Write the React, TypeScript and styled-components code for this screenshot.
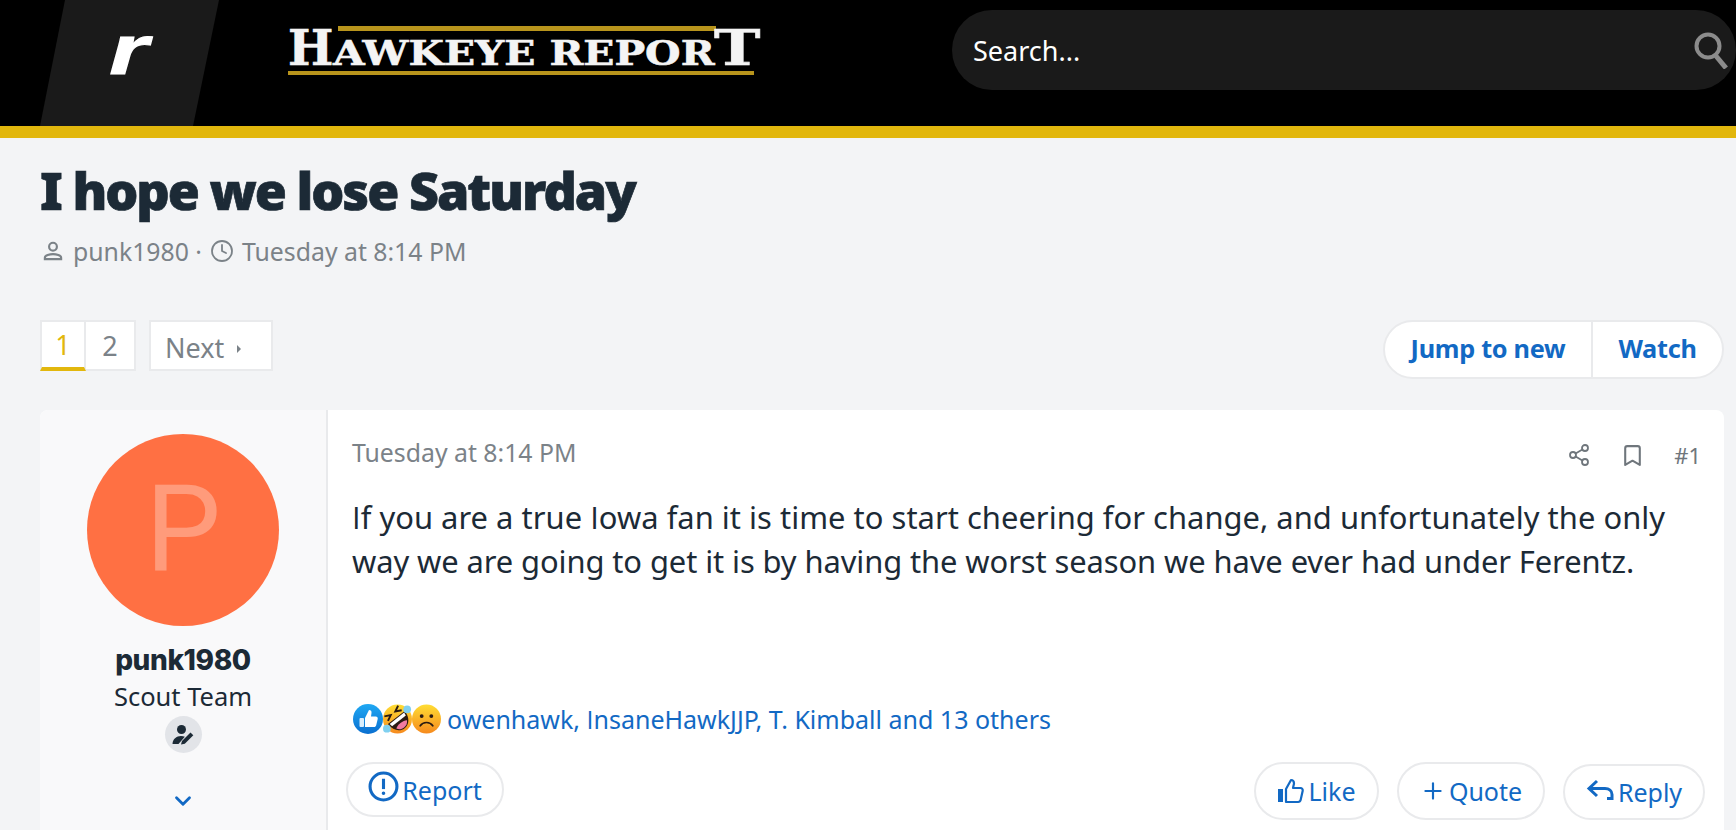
import React from "react";
import styled, { createGlobalStyle } from "styled-components";
import { Bookmark, ChevronDown, Clock, Plus, Share2 } from "lucide-react";

const GlobalStyle = createGlobalStyle`
  html, body {
    margin: 0;
    height: 830px;
    overflow: hidden;
    background: #f3f4f6;
    font-family: "Noto Sans", sans-serif;
  }
`;

const Header = styled.header`
  height: 126px;
  background: #000;
  border-bottom: 12px solid #e2b70d;
  display: flex;
  padding-left: 40px;
`;

const BrandBadge = styled.div`
  width: 179px;
  height: 126px;
  background: #1a1a1a;
  clip-path: polygon(25px 0, 100% 0, 153px 100%, 0 100%);
  display: flex;
  align-items: center;
  justify-content: center;
`;

const BrandLetter = styled.span`
  font: italic 700 70px/1 "Liberation Sans", sans-serif;
  color: #fff;
  display: block;
  -webkit-text-stroke: 1px #fff;
  transform: translate(-1px, -13px) scaleX(1.42);
`;

const Logo = styled.div`
  flex: none;
  width: 472px;
  margin: 26px 0 0 69px;
  display: flex;
  flex-direction: column;
`;

const LogoTopRule = styled.div`
  flex: none;
  height: 5px;
  width: 378px;
  margin-left: 50px;
  background: #b8941c;
`;

const LogoWord = styled.div`
  flex: none;
  height: 40px;
  display: flex;
  align-items: baseline;
  color: #f4f4f4;
  font-family: "DejaVu Serif", serif;
  font-weight: 700;
  line-height: 40px;
  white-space: nowrap;
  margin-top: -3px;
  -webkit-text-stroke: 0.6px #f4f4f4;
`;

const LogoSmall = styled.span`
  display: inline-block;
  flex: none;
  width: 381px;
  font-size: 34px;
  transform-origin: 0 100%;
  transform: scaleX(1.2);
`;

const LogoBig = styled.span<{ $stretch?: number }>`
  flex: none;
  font-size: 48px;
  transform-origin: 0 100%;
  transform: scaleX(${(p) => p.$stretch ?? 1});
`;

const LogoBottomRule = styled.div`
  flex: none;
  height: 4px;
  width: 466px;
  margin-top: 3px;
  background: #b8941c;
`;

const SearchBar = styled.div`
  flex: 1;
  height: 80px;
  margin: 10px 0 0 192px;
  padding: 0 6px 0 21px;
  box-sizing: border-box;
  background: #1a1a1a;
  border-radius: 40px;
  display: flex;
  align-items: center;
  justify-content: space-between;
  color: #fff;
  font-size: 27px;
`;

const Main = styled.main`
  padding: 0 12px 0 40px;
`;

const Title = styled.h1`
  margin: 0;
  padding-top: 22px;
  font-size: 52px;
  line-height: 60px;
  font-weight: 900;
  letter-spacing: -2px;
  -webkit-text-stroke: 0.7px #1c2a36;
  color: #1c2a36;
`;

const Meta = styled.div`
  display: flex;
  align-items: center;
  gap: 8px;
  margin-top: 14px;
  height: 34px;
  font-size: 24.8px;
  color: #7b8288;
  svg {
    flex: none;
  }
  svg:first-child {
    margin-right: -1px;
  }
`;

const Toolbar = styled.div`
  display: flex;
  justify-content: space-between;
  align-items: flex-start;
  margin-top: 52px;
`;

const Pages = styled.div`
  display: flex;
  height: 51px;
`;

const PageLink = styled.a<{ $active?: boolean }>`
  box-sizing: border-box;
  width: ${(p) => (p.$active ? "46px" : "50px")};
  display: flex;
  align-items: center;
  justify-content: center;
  background: #fff;
  border: 2px solid #e9eaec;
  border-left-width: ${(p) => (p.$active ? "2px" : "0")};
  border-bottom: ${(p) => (p.$active ? "4px solid #e2b70d" : "2px solid #e9eaec")};
  font-size: 27px;
  color: ${(p) => (p.$active ? "#e2b70d" : "#7b8288")};
`;

const NextLink = styled.a`
  box-sizing: border-box;
  width: 124px;
  margin-left: 13px;
  display: flex;
  align-items: center;
  padding: 3px 0 0 14px;
  gap: 13px;
  background: #fff;
  border: 2px solid #e9eaec;
  font-size: 27px;
  color: #7b8288;
`;

const Caret = styled.span`
  width: 0;
  height: 0;
  margin-top: 3px;
  border-left: 4px solid #7b8288;
  border-top: 4px solid transparent;
  border-bottom: 4px solid transparent;
`;

const ButtonGroup = styled.div`
  display: flex;
  height: 59px;
  box-sizing: border-box;
  background: #fff;
  border: 2px solid #e9eaec;
  border-radius: 30px;
`;

const GroupButton = styled.a<{ $width: number }>`
  width: ${(p) => p.$width}px;
  padding-bottom: 3px;
  box-sizing: border-box;
  display: flex;
  align-items: center;
  justify-content: center;
  font-size: 25.3px;
  font-weight: 700;
  letter-spacing: -0.3px;
  color: #1269c4;
  & + & {
    border-left: 2px solid #e9eaec;
  }
`;

const Post = styled.article`
  display: flex;
  height: 420px;
  margin-top: 31px;
  background: #fff;
  border-radius: 8px 8px 0 0;
  overflow: hidden;
`;

const UserColumn = styled.aside`
  box-sizing: border-box;
  width: 288px;
  flex: none;
  padding-top: 24px;
  background: #f9f9fa;
  border-right: 2px solid #e9eaec;
  display: flex;
  flex-direction: column;
  align-items: center;
`;

const Avatar = styled.div`
  width: 192px;
  height: 192px;
  border-radius: 50%;
  background: #ff7043;
  color: rgba(255, 255, 255, 0.3);
  display: flex;
  align-items: center;
  justify-content: center;
  font: 400 120px/1 Roboto, sans-serif;
`;

const UserName = styled.div`
  margin-top: 16px;
  font: 800 28px/36px Inter, sans-serif;
  letter-spacing: -0.4px;
  color: #1c2a36;
`;

const UserTitle = styled.div`
  font-size: 25.5px;
  line-height: 36px;
  margin: 0 0 2px;
  color: #1c2a36;
`;

const UserBadge = styled.div`
  width: 37px;
  height: 37px;
  border-radius: 50%;
  background: #e2e4e8;
  display: flex;
  align-items: center;
  justify-content: center;
`;

const Expand = styled.div`
  margin-top: 35px;
  color: #1269c4;
  display: flex;
`;

const PostBody = styled.div`
  flex: 1;
  min-width: 0;
  display: flex;
  flex-direction: column;
`;

const PostHead = styled.div`
  display: flex;
  align-items: flex-start;
  justify-content: space-between;
  padding: 26px 23px 0 24px;
  height: 32px;
  font-size: 24.8px;
  line-height: 32px;
  color: #7b8288;
`;

const PostTools = styled.div`
  display: flex;
  align-items: center;
  height: 38px;
  color: #6f767c;
  font-size: 22px;
  gap: 29px;
`;

const PostText = styled.div`
  padding: 27px 24px 0 24px;
  font-size: 30.9px;
  line-height: 44px;
  color: #1c2a36;
`;

const PostLine = styled.div<{ $tracking: number }>`
  letter-spacing: ${(p) => p.$tracking}px;
  white-space: nowrap;
`;

const Reactions = styled.div`
  display: flex;
  align-items: center;
  margin-top: 121px;
  padding-left: 25px;
  height: 30px;
  color: #1269c4;
  font-size: 25px;
`;

const PlainI = styled.span`
  font-family: "Open Sans", sans-serif;
`;

const ReactionIcons = styled.div`
  display: flex;
  margin-right: 6px;
`;

const Actions = styled.div`
  display: flex;
  align-items: flex-start;
  justify-content: space-between;
  margin-top: 28px;
  padding: 0 19px 0 18px;
`;

const ActionGroup = styled.div`
  display: flex;
  gap: 18px;
`;

const ActionButton = styled.a<{ $width: number; $height?: number; $drop?: number }>`
  box-sizing: border-box;
  width: ${(p) => p.$width}px;
  height: ${(p) => p.$height ?? 58}px;
  margin-top: ${(p) => p.$drop ?? 0}px;
  display: flex;
  align-items: center;
  justify-content: center;
  gap: 3px;
  border: 2px solid #e9eaec;
  border-radius: 29px;
  background: #fff;
  color: #1269c4;
  font-size: 25px;
`;

const SearchIcon = () => (
  <svg width="38" height="38" viewBox="0 0 38 38" fill="none" stroke="#8c8c8c" strokeWidth="4">
    <circle cx="16" cy="15" r="11.5" />
    <path d="M24 25l10 12" strokeWidth="5" />
  </svg>
);

const UserIcon = () => (
  <svg width="26" height="26" viewBox="0 0 24 24" fill="none" stroke="#7b8288" strokeWidth="2">
    <circle cx="12" cy="8" r="3.6" />
    <path d="M4.5 19.5v-1.2c0-2.2 4.4-3.4 7.5-3.4s7.5 1.2 7.5 3.4v1.2z" />
  </svg>
);

const PosterIcon = () => (
  <svg width="24" height="24" viewBox="0 0 24 24" fill="#1c2a36">
    <circle cx="10.5" cy="6.5" r="4.5" />
    <path d="M1.500 21c0-5 4-8 8.500-8 1.500 0 2.800.3 3.800.8L7.500 21z" />
    <path d="M10 21.500l1-3.500 8.500-8.500 2.800 2.800-8.500 8.500z" />
  </svg>
);

const ThumbIcon = () => (
  <svg width="28" height="28" viewBox="0 0 28 28" fill="none" stroke="#1269c4" strokeWidth="2.2" strokeLinejoin="round">
    <rect x="1" y="12" width="5" height="13" fill="#1269c4" stroke="none" />
    <path d="M9 12l5-9c2 0 3 1.600 3 3.500L16 11h7.500c1.500 0 2.500 1.300 2.200 2.800l-2 9c-.3 1.300-1.200 2.200-2.600 2.200H9z" />
  </svg>
);

const ReplyIcon = () => (
  <svg width="29" height="28" viewBox="0 0 29 28" fill="none" stroke="#1269c4" strokeWidth="3">
    <path d="M11 3L3 10.500 11 18" />
    <path d="M4 10.500h15c4 0 7 2.500 7 6v4h-5" />
  </svg>
);

const ReportIcon = () => (
  <svg width="31" height="31" viewBox="0 0 30 30" fill="none" stroke="#1269c4" strokeWidth="3" style={{ marginTop: -6 }}>
    <circle cx="15" cy="15" r="13" />
    <path d="M15 7.500v10" />
    <circle cx="15" cy="21.500" r="1" fill="#1269c4" strokeWidth="1.500" />
  </svg>
);

const LikeEmoji = () => (
  <svg width="30" height="30" viewBox="0 0 30 30">
    <defs>
      <linearGradient id="likeFill" x1="0" y1="0" x2="0" y2="1">
        <stop offset="0" stopColor="#1fa8f3" />
        <stop offset="1" stopColor="#0a6fd0" />
      </linearGradient>
    </defs>
    <circle cx="15" cy="15" r="15" fill="url(#likeFill)" />
    <rect x="6.500" y="14" width="4.500" height="9" rx="1" fill="#d9eefc" />
    <path d="M12 14l4-8c1.800 0 2.800 1.300 2.500 3l-.5 3.500h4.800c1.400 0 2.200 1.200 1.900 2.400l-1.500 6.300c-.3 1.100-1 1.800-2.200 1.800H12z" fill="#fff" />
  </svg>
);

const LaughEmoji = () => (
  <svg width="29" height="30" viewBox="0 0 30 30">
    <defs>
      <linearGradient id="laughFill" x1="0" y1="0" x2="0" y2="1">
        <stop offset="0" stopColor="#ffdd33" />
        <stop offset="1" stopColor="#f68a1e" />
      </linearGradient>
    </defs>
    <circle cx="15" cy="15" r="15" fill="url(#laughFill)" />
    <g transform="rotate(-38 15 15)">
      <path d="M4 13h22c0 9-5 14-11 14S4 22 4 13z" fill="#2a1a12" />
      <path d="M8 22c3-2.500 11-2.500 14 0-1.800 3-4 4-7 4s-5.200-1-7-4z" fill="#f27aa0" />
      <path d="M5.500 14h19l-.5 3.500H6z" fill="#fff" />
      <path d="M6 4.500l6 3-6 3M24 4.500l-6 3 6 3" fill="none" stroke="#2a1a12" strokeWidth="2" />
    </g>
    <circle cx="4" cy="25" r="4" fill="#7fd0f0" />
    <circle cx="25" cy="5" r="4" fill="#7fd0f0" />
  </svg>
);

const SadEmoji = () => (
  <svg width="29" height="30" viewBox="0 0 30 30">
    <defs>
      <linearGradient id="sadFill" x1="0" y1="0" x2="0" y2="1">
        <stop offset="0" stopColor="#ffdd33" />
        <stop offset="1" stopColor="#f68a1e" />
      </linearGradient>
    </defs>
    <circle cx="15" cy="15" r="15" fill="url(#sadFill)" />
    <circle cx="10" cy="12" r="2" fill="#2a1a12" />
    <circle cx="20" cy="12" r="2" fill="#2a1a12" />
    <path d="M8.500 22c3-4.500 10-4.500 13 0" fill="none" stroke="#2a1a12" strokeWidth="1.800" strokeLinecap="round" />
  </svg>
);

const App = () => (
  <>
    <GlobalStyle />
    <Header>
      <BrandBadge>
        <BrandLetter>r</BrandLetter>
      </BrandBadge>
      <Logo>
        <LogoTopRule />
        <LogoWord>
          <LogoBig>H</LogoBig>
          <LogoSmall>AWKEYE REPOR</LogoSmall>
          <LogoBig $stretch={1.3}>T</LogoBig>
        </LogoWord>
        <LogoBottomRule />
      </Logo>
      <SearchBar>
        <span>Search...</span>
        <SearchIcon />
      </SearchBar>
    </Header>
    <Main>
      <Title>I hope we lose Saturday</Title>
      <Meta>
        <UserIcon />
        <span>punk1980 ·</span>
        <Clock size={24} strokeWidth={1.8} />
        <span>Tuesday at 8:14 PM</span>
      </Meta>
      <Toolbar>
        <Pages>
          <PageLink $active>1</PageLink>
          <PageLink>2</PageLink>
          <NextLink>
            Next <Caret />
          </NextLink>
        </Pages>
        <ButtonGroup>
          <GroupButton $width={206}>Jump to new</GroupButton>
          <GroupButton $width={131}>Watch</GroupButton>
        </ButtonGroup>
      </Toolbar>
      <Post>
        <UserColumn>
          <Avatar>P</Avatar>
          <UserName>punk1980</UserName>
          <UserTitle>Scout Team</UserTitle>
          <UserBadge>
            <PosterIcon />
          </UserBadge>
          <Expand>
            <ChevronDown size={26} strokeWidth={2.6} />
          </Expand>
        </UserColumn>
        <PostBody>
          <PostHead>
            <span>Tuesday at 8:14 PM</span>
            <PostTools>
              <Share2 size={24} strokeWidth={1.8} />
              <Bookmark size={25} strokeWidth={2} />
              <span>#1</span>
            </PostTools>
          </PostHead>
          <PostText>
            <PostLine $tracking={0.03}>
              <PlainI>I</PlainI>f you are a true <PlainI>I</PlainI>owa fan it is time to start cheering for change, and
              unfortunately the only
            </PostLine>
            <PostLine $tracking={-0.09}>
              way we are going to get it is by having the worst season we have ever had under Ferentz.
            </PostLine>
          </PostText>
          <Reactions>
            <ReactionIcons>
              <LikeEmoji />
              <LaughEmoji />
              <SadEmoji />
            </ReactionIcons>
            <span>
              owenhawk, <PlainI>I</PlainI>nsaneHawkJJP, T. Kimball and 13 others
            </span>
          </Reactions>
          <Actions>
            <ActionButton $width={158} $height={55}>
              <ReportIcon />
              Report
            </ActionButton>
            <ActionGroup>
              <ActionButton $width={125}>
                <ThumbIcon />
                Like
              </ActionButton>
              <ActionButton $width={148}>
                <Plus size={26} strokeWidth={2} />
                Quote
              </ActionButton>
              <ActionButton $width={142} $height={56} $drop={2}>
                <ReplyIcon />
                Reply
              </ActionButton>
            </ActionGroup>
          </Actions>
        </PostBody>
      </Post>
    </Main>
  </>
);

export default App;
